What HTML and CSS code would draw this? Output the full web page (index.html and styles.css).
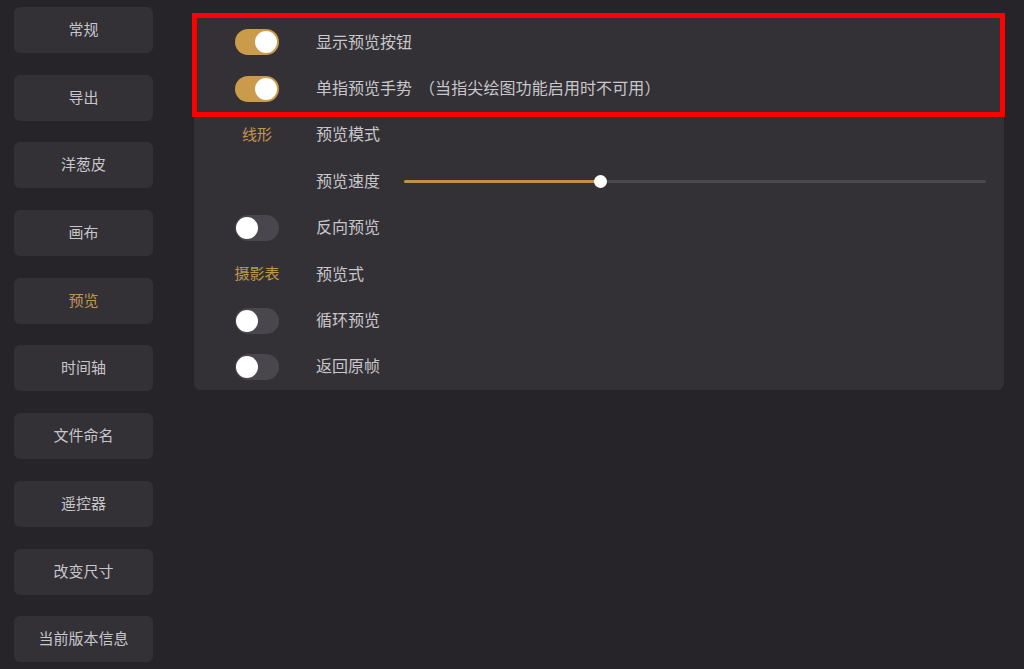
FILE: index.html
```html
<!DOCTYPE html>
<html lang="zh-CN">
<head>
    <meta charset="UTF-8">
    <meta name="viewport" content="width=device-width, initial-scale=1.0">
    <title>设置 - 预览</title>
    <link rel="stylesheet" href="styles.css">
</head>
<body>
    <div class="layout">
        <nav class="sidebar">
            <div class="nav-item">常规</div>
            <div class="nav-item">导出</div>
            <div class="nav-item">洋葱皮</div>
            <div class="nav-item">画布</div>
            <div class="nav-item active">预览</div>
            <div class="nav-item">时间轴</div>
            <div class="nav-item">文件命名</div>
            <div class="nav-item">遥控器</div>
            <div class="nav-item">改变尺寸</div>
            <div class="nav-item">当前版本信息</div>
        </nav>

        <main class="panel">
            <div class="row">
                <div class="lead"><span class="toggle on"></span></div>
                <div class="label">显示预览按钮</div>
            </div>
            <div class="row">
                <div class="lead"><span class="toggle on"></span></div>
                <div class="label">单指预览手势<span class="note">（当指尖绘图功能启用时不可用）</span></div>
            </div>
            <div class="row">
                <div class="lead value">线形</div>
                <div class="label">预览模式</div>
            </div>
            <div class="row">
                <div class="lead"></div>
                <div class="label">预览速度</div>
                <div class="slider">
                    <div class="slider-fill" style="width: 33.6%"></div>
                    <div class="slider-knob" style="left: 33.6%"></div>
                </div>
            </div>
            <div class="row">
                <div class="lead"><span class="toggle"></span></div>
                <div class="label">反向预览</div>
            </div>
            <div class="row">
                <div class="lead value">摄影表</div>
                <div class="label">预览式</div>
            </div>
            <div class="row">
                <div class="lead"><span class="toggle"></span></div>
                <div class="label">循环预览</div>
            </div>
            <div class="row">
                <div class="lead"><span class="toggle"></span></div>
                <div class="label">返回原帧</div>
            </div>
        </main>
    </div>

    <!-- annotation box over the first two rows -->
    <div class="highlight"></div>
</body>
</html>
```

FILE: styles.css
```css
body {
    margin: 0;
    background: #262429;
    font-family: "Noto Sans CJK SC", "Noto Sans", sans-serif;
    color: #c9c7cc;
    height: 669px;
    overflow: hidden;
}
.layout {
    display: flex;
    align-items: flex-start;
}
.sidebar {
    width: 139px;
    padding: 7px 0 0 14px;
    display: flex;
    flex-direction: column;
    gap: 21.7px;
}
.nav-item {
    height: 46px;
    padding-bottom: 3px;
    box-sizing: border-box;
    background: #333136;
    border-radius: 6px;
    display: flex;
    align-items: center;
    justify-content: center;
    font-size: 15px;
    color: #c8c6cb;
}
.nav-item.active {
    color: #c39550;
}
.panel {
    margin-top: 14px;
    margin-left: 41px;
    width: 810px;
    padding-top: 5px;
    background: #333136;
    border-radius: 7px;
}
.row {
    height: 46.4px;
    display: flex;
    align-items: center;
    padding-right: 18px;
}
.lead {
    width: 118px;
    padding-left: 4px;
    display: flex;
    justify-content: center;
    align-items: center;
    font-size: 15px;
}
.value {
    color: #c39550;
    padding-bottom: 3px;
}
.label {
    font-size: 16px;
    color: #c9c7cc;
    white-space: nowrap;
    padding-bottom: 3px;
}
.note {
    margin-left: 7px;
    letter-spacing: 0.1px;
}
.toggle {
    position: relative;
    width: 44px;
    height: 26px;
    border-radius: 13px;
    background: #49474d;
}
.toggle::after {
    content: "";
    position: absolute;
    top: 2px;
    left: 1px;
    width: 22px;
    height: 22px;
    border-radius: 50%;
    background: #fff;
}
.toggle.on {
    background: #c99b4b;
}
.toggle.on::after {
    left: 20px;
}
.slider {
    position: relative;
    flex: 1;
    height: 3px;
    margin-left: 24px;
    border-radius: 2px;
    background: #4a484d;
}
.slider-fill {
    height: 3px;
    border-radius: 2px;
    background: #c0914b;
}
.slider-knob {
    position: absolute;
    top: -5px;
    width: 13px;
    height: 13px;
    margin-left: -6px;
    border-radius: 50%;
    background: #fff;
}
.highlight {
    position: absolute;
    left: 192px;
    top: 13px;
    width: 803px;
    height: 94px;
    border: 5px solid #ff0000;
}
```
